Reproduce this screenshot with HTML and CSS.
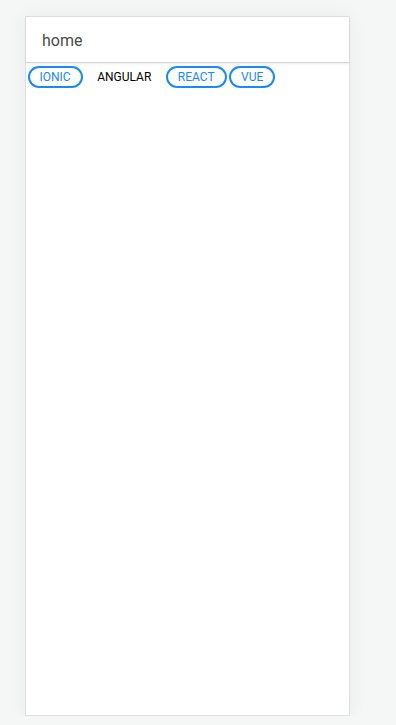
FILE: index.html
```html
<!DOCTYPE html>
<html>
<head>
<meta charset="utf-8">
<link rel="stylesheet" href="styles.css">
</head>
<body>
<div class="page">
  <div class="card">
    <header class="toolbar"><span class="title">home</span></header>
    <div class="buttons">
      <button class="btn outline">Ionic</button>
      <button class="btn clear">Angular</button>
      <button class="btn outline">React</button>
      <button class="btn outline">Vue</button>
    </div>
  </div>
</div>
</body>
</html>
```
FILE: styles.css
```css
html, body {
  margin: 0;
  padding: 0;
  background: #f5f6f6;
  font-family: Roboto, "Liberation Sans", sans-serif;
}
.page {
  padding: 16px 0 0 25px;
}
.card {
  width: 325px;
  height: 700px;
  box-sizing: border-box;
  border: 1px solid #dfdfdf;
  background: #fff;
  box-shadow: 0 0 18px rgba(0, 0, 0, 0.05);
}
.toolbar {
  height: 46px;
  display: flex;
  align-items: center;
  padding: 1px 0 0 16px;
  box-sizing: border-box;
  border-bottom: 1px solid #d4d4d4;
  box-shadow: 0 1px 2px rgba(0, 0, 0, 0.07);
}
.title {
  font-size: 16px;
  color: #4a4a4a;
}
.buttons {
  display: flex;
  gap: 2.5px;
  padding: 3px 0 0 1.5px;
}
.btn {
  font-family: Roboto, "Liberation Sans", sans-serif;
  font-size: 12px;
  font-weight: 400;
  text-transform: uppercase;
  height: 22px;
  padding: 0 10px;
  border: 2px solid transparent;
  border-radius: 12px;
  background: transparent;
  line-height: 18px;
  margin: 0;
}
.outline {
  border-color: #1a88ff;
  color: #1a88ff;
}
.clear {
  color: #000;
}
```
